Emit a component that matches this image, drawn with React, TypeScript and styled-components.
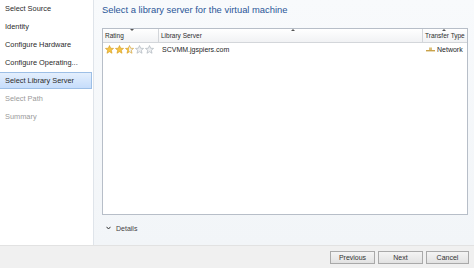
import * as React from 'react';
import styled, { createGlobalStyle } from 'styled-components';

const GlobalStyle = createGlobalStyle`
    html, body {
        margin: 0;
        padding: 0;
        width: 474px;
        height: 268px;
        overflow: hidden;
        background: #ffffff;
        font-family: 'Liberation Sans', Arial, sans-serif;
        color: #1e1e1e;
    }
`

const Root = styled.div`
    display: flex;
    flex-direction: column;
    width: 474px;
    height: 268px;
`

const Body = styled.div`
    display: flex;
    flex: 1;
    min-height: 0;
`

const Nav = styled.div`
    display: flex;
    flex-direction: column;
    gap: 1px;
    width: 92px;
    padding-right: 1px;
    background: #ffffff;
`

const NavItem = styled.div<{ selected?: boolean; disabled?: boolean }>`
    box-sizing: border-box;
    height: 17px;
    line-height: 16px;
    padding-left: 5px;
    font-size: 7.4px;
    white-space: nowrap;
    color: ${(p) => (p.disabled ? '#9a9a9a' : '#2a2a2a')};
    background: ${(p) => (p.selected ? 'linear-gradient(#e4effd, #c6ddfb)' : 'transparent')};
    border: 1px solid ${(p) => (p.selected ? '#9dbfe6' : 'transparent')};
    border-left: none;
`

const Main = styled.div`
    flex: 1;
    display: flex;
    flex-direction: column;
    padding: 0 6px 0 8px;
    background: linear-gradient(#f8fafc, #f2f5f8);
    border-left: 1px solid #dfe4ea;
`

const Title = styled.div`
    height: 28px;
    line-height: 20px;
    font-size: 9.4px;
    color: #2a5698;
    white-space: nowrap;
`

const List = styled.div`
    box-sizing: border-box;
    height: 187px;
    display: flex;
    flex-direction: column;
    background: #ffffff;
    border: 1px solid #b7bec8;
`

const GridRow = styled.div<{ header?: boolean }>`
    display: grid;
    grid-template-columns: 56px 1fr 44px;
    height: ${(p) => (p.header ? '13px' : '12px')};
    background: ${(p) => (p.header ? 'linear-gradient(#ffffff, #f1f2f4)' : '#ffffff')};
    border-bottom: 1px solid ${(p) => (p.header ? '#d3d6da' : 'transparent')};
`

const HeaderCell = styled.div<{ last?: boolean }>`
    position: relative;
    display: flex;
    align-items: center;
    padding-left: 2px;
    font-size: 6.5px;
    color: #2d2d2d;
    white-space: nowrap;
    overflow: hidden;
    border-right: ${(p) => (p.last ? 'none' : '1px solid #d3d6da')};
`

const SortMark = styled.span<{ up?: boolean; left: number }>`
    position: absolute;
    top: 0;
    left: ${(p) => p.left}px;
    width: 0;
    height: 0;
    border-left: 2px solid transparent;
    border-right: 2px solid transparent;
    ${(p) => (p.up ? 'border-bottom: 2px solid #555;' : 'border-top: 2px solid #555;')}
`

const Cell = styled.div`
    display: flex;
    align-items: center;
    gap: 2px;
    padding-left: 3px;
    font-size: 7px;
    color: #1e1e1e;
    white-space: nowrap;
`

const Stars = styled(Cell)`
    gap: 1px;
    padding-left: 2px;
`

const Details = styled.div`
    display: flex;
    align-items: center;
    gap: 5px;
    height: 26px;
    padding-left: 4px;
    font-size: 7px;
    color: #444;
`

const Footer = styled.div`
    display: flex;
    justify-content: flex-end;
    align-items: center;
    gap: 3px;
    height: 22px;
    padding-right: 5px;
    background: #f0f0f0;
    border-top: 1px solid #e2e2e2;
`

const Button = styled.button<{ w: number }>`
    box-sizing: border-box;
    width: ${(p) => p.w}px;
    height: 13px;
    padding: 0;
    font-family: 'Liberation Sans', Arial, sans-serif;
    font-size: 7px;
    color: #333;
    background: linear-gradient(#f4f4f4, #e2e2e2);
    border: 1px solid #a9a9a9;
    border-radius: 0;
`

const STAR = 'M5 0.6 L6.3 3.6 L9.5 3.8 L7 5.9 L7.8 9.2 L5 7.4 L2.2 9.2 L3 5.9 L0.5 3.8 L3.7 3.6 Z'

const Star = ({ fill }: { fill: number }) => (
    <svg width="9" height="9" viewBox="0 0 10 10">
        <defs>
            <linearGradient id="halfStar" x1="0" x2="1" y1="0" y2="0">
                <stop offset="50%" stopColor="#f6c443" />
                <stop offset="50%" stopColor="#eef0f2" />
            </linearGradient>
        </defs>
        <path
            d={STAR}
            fill={fill >= 1 ? '#f6c443' : fill > 0 ? 'url(#halfStar)' : '#eef0f2'}
            stroke={fill > 0 ? '#d49a1c' : '#a8afb8'}
            strokeWidth="0.7"
        />
    </svg>
)

const NetworkIcon = () => (
    <svg width="9" height="6" viewBox="0 0 9 6">
        <rect x="0" y="4" width="9" height="1.4" fill="#c9a24a" />
        <rect x="3" y="1.5" width="3" height="2.5" fill="#dcc07a" />
    </svg>
)

const navItems = [
    { label: 'Select Source' },
    { label: 'Identity' },
    { label: 'Configure Hardware' },
    { label: 'Configure Operating...' },
    { label: 'Select Library Server', selected: true },
    { label: 'Select Path', disabled: true },
    { label: 'Summary', disabled: true },
]

export default function App() {
    const rating = 2.5
    return (
        <Root>
            <GlobalStyle />
            <Body>
                <Nav>
                    {navItems.map((item) => (
                        <NavItem key={item.label} selected={item.selected} disabled={item.disabled}>
                            {item.label}
                        </NavItem>
                    ))}
                </Nav>
                <Main>
                    <Title>Select a library server for the virtual machine</Title>
                    <List>
                        <GridRow header>
                            <HeaderCell>Rating<SortMark left={27} /></HeaderCell>
                            <HeaderCell>Library Server<SortMark up left={132} /></HeaderCell>
                            <HeaderCell last>Transfer Type<SortMark up left={19} /></HeaderCell>
                        </GridRow>
                        <GridRow>
                            <Stars>
                                {[0, 1, 2, 3, 4].map((i) => (
                                    <Star key={i} fill={Math.max(0, Math.min(1, rating - i))} />
                                ))}
                            </Stars>
                            <Cell>SCVMM.jgspiers.com</Cell>
                            <Cell><NetworkIcon />Network</Cell>
                        </GridRow>
                    </List>
                    <Details>
                        <svg width="5" height="4" viewBox="0 0 5 4">
                            <path d="M0.5 0.8 L2.5 3 L4.5 0.8" fill="none" stroke="#333" strokeWidth="1" />
                        </svg>
                        Details
                    </Details>
                </Main>
            </Body>
            <Footer>
                <Button w={45}>Previous</Button>
                <Button w={45}>Next</Button>
                <Button w={43}>Cancel</Button>
            </Footer>
        </Root>
    )
}
